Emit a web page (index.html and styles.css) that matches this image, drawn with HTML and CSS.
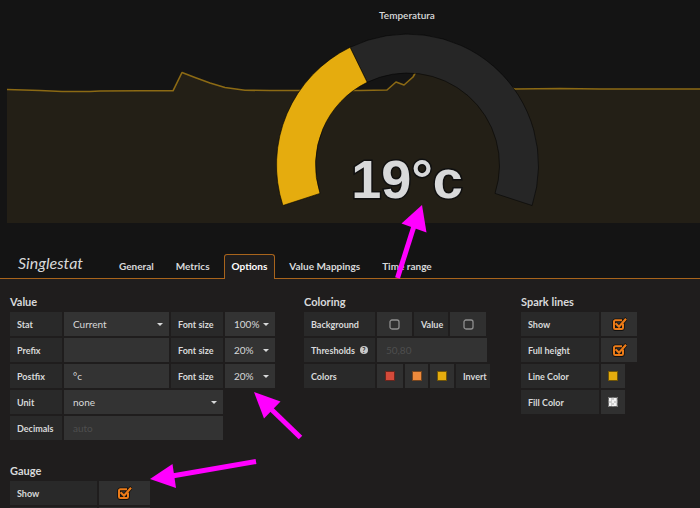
FILE: index.html
```html
<!DOCTYPE html>
<html lang="es">
<head>
<meta charset="utf-8">
<title>Singlestat</title>
<link rel="stylesheet" href="styles.css">
</head>
<body>
<div class="panel">
  <svg class="panel-graph" width="700" height="240" viewBox="0 0 700 240">
    <text class="panel-title" x="407" y="19" text-anchor="middle">Temperatura</text>
    <path class="spark-fill" d="M7 223 L7 89.5 L40 90.5 L62 91.5 L90 91.5 L100 91 L140 90.8 L173 90.8 L182 72.5 L195 77.5 L210 83 L225 87.5 L245 90.2 L270 90.5 L300 90.5 L330 90.5 L360 90.5 L387 90 L396 82 L404 85 L413 77 L418 68 L430 58 L455 55 L480 68 L505 86 L515 89 L560 88.5 L600 89 L700 89 L700 223 Z"/>
    <path class="spark-line" d="M7 89.5 L40 90.5 L62 91.5 L90 91.5 L100 91 L140 90.8 L173 90.8 L182 72.5 L195 77.5 L210 83 L225 87.5 L245 90.2 L270 90.5 L300 90.5 L330 90.5 L360 90.5 L387 90 L396 82 L404 85 L413 77 L418 68 L430 58 L455 55 L480 68 L505 86 L515 89 L560 88.5 L600 89 L700 89"/>
    <path class="gauge-bg" d="M350.1 47.3 A131 131 0 0 1 532.1 205.5 L495 193.4 A92 92 0 0 0 367.2 82.3 Z"/>
    <path class="gauge-value" d="M282.9 205.5 A131 131 0 0 1 350.1 47.3 L367.2 82.3 A92 92 0 0 0 320 193.4 Z"/>
    <text class="gauge-text" x="407" y="198" text-anchor="middle">19°c</text>
  </svg>
</div>

<div class="tabbar">
  <h2 class="editor-title">Singlestat</h2>
  <ul class="tabs">
    <li class="tab">General</li>
    <li class="tab">Metrics</li>
    <li class="tab active">Options</li>
    <li class="tab">Value Mappings</li>
    <li class="tab">Time range</li>
  </ul>
</div>

<div class="editor">
  <section class="section sec-value">
    <h5 class="section-heading">Value</h5>
    <div class="row">
      <span class="label w52">Stat</span>
      <span class="field select w105">Current<i class="caret"></i></span>
      <span class="label w52">Font size</span>
      <span class="field select w50">100%<i class="caret"></i></span>
    </div>
    <div class="row">
      <span class="label w52">Prefix</span>
      <span class="field w105"></span>
      <span class="label w52">Font size</span>
      <span class="field select w50">20%<i class="caret"></i></span>
    </div>
    <div class="row">
      <span class="label w52">Postfix</span>
      <span class="field w105">°c</span>
      <span class="label w52">Font size</span>
      <span class="field select w50">20%<i class="caret"></i></span>
    </div>
    <div class="row">
      <span class="label w52">Unit</span>
      <span class="field select w159">none<i class="caret"></i></span>
    </div>
    <div class="row">
      <span class="label w52">Decimals</span>
      <span class="field placeholder w159">auto</span>
    </div>
  </section>

  <section class="section sec-coloring">
    <h5 class="section-heading">Coloring</h5>
    <div class="row">
      <span class="label w71">Background</span>
      <span class="cell w35"><svg class="box-off" width="11" height="11" viewBox="0 0 11 11"><rect x="1" y="1" width="9" height="9" rx="2"/></svg></span>
      <span class="label w34">Value</span>
      <span class="cell w36"><svg class="box-off" width="11" height="11" viewBox="0 0 11 11"><rect x="1" y="1" width="9" height="9" rx="2"/></svg></span>
    </div>
    <div class="row">
      <span class="label w71">Thresholds <b class="help">?</b></span>
      <span class="field placeholder w110">50,80</span>
    </div>
    <div class="row">
      <span class="label w71">Colors</span>
      <span class="cell w26"><i class="swatch sw-red"></i></span>
      <span class="cell w23"><i class="swatch sw-orange"></i></span>
      <span class="cell w24"><i class="swatch sw-yellow"></i></span>
      <span class="label w34">Invert</span>
    </div>
  </section>

  <section class="section sec-spark">
    <h5 class="section-heading">Spark lines</h5>
    <div class="row">
      <span class="label w78">Show</span>
      <span class="cell w36"><svg class="box-on" width="15" height="14" viewBox="0 0 15 14"><path class="outline" d="M11 7.5v3.3a1.3 1.3 0 0 1-1.3 1.3H3.3A1.3 1.3 0 0 1 2 10.8V4.6a1.3 1.3 0 0 1 1.3-1.3H9M4.3 7l2.7 2.7L13.3 2.6"/><path class="box" d="M11 7.5v3.3a1.3 1.3 0 0 1-1.3 1.3H3.3A1.3 1.3 0 0 1 2 10.8V4.6a1.3 1.3 0 0 1 1.3-1.3H9"/><path class="tick" d="M4.3 7l2.7 2.7L13.3 2.6"/></svg></span>
    </div>
    <div class="row">
      <span class="label w78">Full height</span>
      <span class="cell w36"><svg class="box-on" width="15" height="14" viewBox="0 0 15 14"><path class="outline" d="M11 7.5v3.3a1.3 1.3 0 0 1-1.3 1.3H3.3A1.3 1.3 0 0 1 2 10.8V4.6a1.3 1.3 0 0 1 1.3-1.3H9M4.3 7l2.7 2.7L13.3 2.6"/><path class="box" d="M11 7.5v3.3a1.3 1.3 0 0 1-1.3 1.3H3.3A1.3 1.3 0 0 1 2 10.8V4.6a1.3 1.3 0 0 1 1.3-1.3H9"/><path class="tick" d="M4.3 7l2.7 2.7L13.3 2.6"/></svg></span>
    </div>
    <div class="row">
      <span class="label w78">Line Color</span>
      <span class="cell w24"><i class="swatch sw-yellow"></i></span>
    </div>
    <div class="row">
      <span class="label w78">Fill Color</span>
      <span class="cell w24"><i class="swatch sw-fill"></i></span>
    </div>
  </section>

  <section class="section sec-gauge">
    <h5 class="section-heading">Gauge</h5>
    <div class="row">
      <span class="label w87">Show</span>
      <span class="cell w51"><svg class="box-on" width="15" height="14" viewBox="0 0 15 14"><path class="outline" d="M11 7.5v3.3a1.3 1.3 0 0 1-1.3 1.3H3.3A1.3 1.3 0 0 1 2 10.8V4.6a1.3 1.3 0 0 1 1.3-1.3H9M4.3 7l2.7 2.7L13.3 2.6"/><path class="box" d="M11 7.5v3.3a1.3 1.3 0 0 1-1.3 1.3H3.3A1.3 1.3 0 0 1 2 10.8V4.6a1.3 1.3 0 0 1 1.3-1.3H9"/><path class="tick" d="M4.3 7l2.7 2.7L13.3 2.6"/></svg></span>
    </div>
    <div class="row">
      <span class="label w87"></span>
      <span class="cell w51"></span>
    </div>
  </section>
</div>

<svg class="annotations" width="700" height="508" viewBox="0 0 700 508">
  <line x1="397.5" y1="278" x2="414" y2="226"/>
  <polygon points="422,205 401.5,223.5 426.5,232.5"/>
  <line x1="300.5" y1="437.5" x2="271" y2="409"/>
  <polygon points="254,392 280.5,401.5 264,418.5"/>
  <line x1="256" y1="461.5" x2="172" y2="476"/>
  <polygon points="150,479 172.5,464 176,488"/>
</svg>
</body>
</html>
```

FILE: styles.css
```css
* {
  box-sizing: border-box;
  margin: 0;
  padding: 0;
}

html,
body {
  background: #141414;
}

body {
  width: 700px;
  height: 508px;
  overflow: hidden;
  position: relative;
  font-family: Lato, "Open Sans", sans-serif;
  color: #d8d9da;
}

/* ---------- panel ---------- */
.panel {
  height: 240px;
}

.panel-graph {
  display: block;
}

.panel-title {
  font-family: Lato, "Open Sans", sans-serif;
  font-size: 10px;
  font-weight: 600;
  fill: #d8d9da;
}

.spark-fill {
  fill: #231f16;
}

.spark-line {
  fill: none;
  stroke: #8c6a14;
  stroke-width: 1.6;
  stroke-linejoin: round;
}

.gauge-bg {
  fill: #262626;
  stroke: rgba(0, 0, 0, 0.5);
  stroke-width: 1;
}

.gauge-value {
  fill: #e5ac0e;
  stroke: rgba(0, 0, 0, 0.6);
  stroke-width: 1;
}

.gauge-text {
  font-family: "Liberation Sans", Arial, sans-serif;
  font-size: 54px;
  font-weight: 700;
  fill: #d8d9da;
  stroke: #101010;
  stroke-width: 3;
  paint-order: stroke;
}

/* ---------- tabs ---------- */
.tabbar {
  height: 39px;
  display: flex;
  align-items: flex-end;
  padding-left: 18px;
  border-bottom: 1px solid #a8641c;
}

.editor-title {
  font-size: 16px;
  font-style: italic;
  font-weight: 400;
  line-height: 19px;
  margin: 0 28px 6px 0;
  color: #d8d9da;
}

.tabs {
  display: flex;
  align-items: flex-end;
  list-style: none;
}

.tab {
  height: 24px;
  padding: 0 7px;
  margin-right: 6px;
  border: 1px solid transparent;
  border-bottom: 0;
  border-radius: 3px 3px 0 0;
  font-size: 10px;
  font-weight: 700;
  line-height: 22px;
  color: #d8d9da;
  white-space: nowrap;
}

.tab.active {
  height: 25px;
  margin-bottom: -1px;
  border-color: #a8641c;
  background: #1f1d1d;
  color: #ffffff;
}

/* ---------- editor ---------- */
.editor {
  height: 229px;
  background: #1f1d1d;
  padding: 16px 10px 0;
  display: flex;
  flex-wrap: wrap;
  align-content: flex-start;
}

.section {
  margin-bottom: 22px;
}

.sec-value {
  width: 265px;
  margin-right: 29px;
}

.sec-coloring {
  width: 186px;
  margin-right: 31px;
}

.sec-spark {
  width: 116px;
}

.sec-gauge {
  width: 100%;
}

.section-heading {
  font-size: 11px;
  font-weight: 700;
  line-height: 14px;
  margin-bottom: 3px;
  color: #d8d9da;
}

.row {
  display: flex;
  gap: 2px;
  margin-bottom: 2px;
}

.label,
.field,
.cell {
  height: 24px;
  flex: none;
  display: flex;
  align-items: center;
  white-space: nowrap;
}

.label {
  background: #292929;
  padding: 0 7px;
  font-size: 9px;
  font-weight: 700;
  color: #d8d9da;
}

.field {
  background: #333333;
  padding: 0 6px 0 9px;
  font-size: 10px;
  color: #d8d9da;
}

.select {
  justify-content: space-between;
}

.placeholder {
  color: #4e4e4e;
}

.cell {
  background: #303030;
  justify-content: center;
}

.caret {
  width: 0;
  height: 0;
  border-left: 3px solid transparent;
  border-right: 3px solid transparent;
  border-top: 3px solid #d8d9da;
}

.help {
  display: inline-flex;
  align-items: center;
  justify-content: center;
  width: 8px;
  height: 8px;
  margin-left: 5px;
  border-radius: 50%;
  background: #c8c8c8;
  color: #292929;
  font-size: 7px;
  font-weight: 700;
}

.box-off rect {
  fill: none;
  stroke: #8f8f8f;
  stroke-width: 1.3;
}

.box-on path {
  fill: none;
  stroke-linecap: square;
  stroke-linejoin: miter;
}

.box-on .outline {
  stroke: #111111;
  stroke-width: 3.6;
}

.box-on .box {
  stroke: #eb7b18;
  stroke-width: 2;
}

.box-on .tick {
  stroke: #eb7b18;
  stroke-width: 2.2;
}

.swatch {
  display: block;
  width: 10px;
  height: 10px;
  border: 1px solid rgba(0, 0, 0, 0.5);
}

.sw-red {
  background: #d44a3a;
}

.sw-orange {
  background: #ed8a3c;
}

.sw-yellow {
  background: #e5ac0e;
}

.sw-fill {
  background: conic-gradient(#cfcfcf 25%, #f4f4f4 0 50%, #cfcfcf 0 75%, #f4f4f4 0) 0 0 / 5px 5px;
}

/* widths */
.w23 { width: 23px; }
.w24 { width: 24px; }
.w26 { width: 26px; }
.w34 { width: 34px; }
.w35 { width: 35px; }
.w36 { width: 36px; }
.w50 { width: 50px; }
.w51 { width: 51px; }
.w52 { width: 52px; }
.w71 { width: 71px; }
.w78 { width: 78px; }
.w87 { width: 87px; }
.w105 { width: 105px; }
.w110 { width: 110px; }
.w159 { width: 159px; }

/* ---------- annotation arrows ---------- */
.annotations {
  position: absolute;
  top: 0;
  left: 0;
  pointer-events: none;
}

.annotations line {
  stroke: #ff00ff;
  stroke-width: 5;
}

.annotations polygon {
  fill: #ff00ff;
}
```
